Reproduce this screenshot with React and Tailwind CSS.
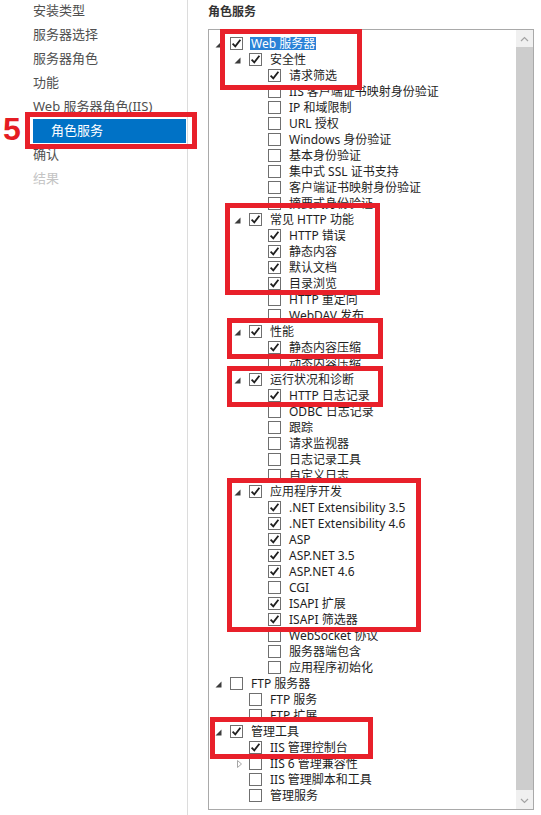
import React from 'react';

const navItems = [
  { label: '安装类型' },
  { label: '服务器选择' },
  { label: '服务器角色' },
  { label: '功能' },
  { label: 'Web 服务器角色(IIS)' },
  { label: '角色服务', active: true },
  { label: '确认' },
  { label: '结果', disabled: true },
];

// [label, level, checked, expander, highlighted]
const rows = [
  ['Web 服务器', 0, true, 'open', true],
  ['安全性', 1, true, 'open'],
  ['请求筛选', 2, true],
  ['IIS 客户端证书映射身份验证', 2, false],
  ['IP 和域限制', 2, false],
  ['URL 授权', 2, false],
  ['Windows 身份验证', 2, false],
  ['基本身份验证', 2, false],
  ['集中式 SSL 证书支持', 2, false],
  ['客户端证书映射身份验证', 2, false],
  ['摘要式身份验证', 2, false],
  ['常见 HTTP 功能', 1, true, 'open'],
  ['HTTP 错误', 2, true],
  ['静态内容', 2, true],
  ['默认文档', 2, true],
  ['目录浏览', 2, true],
  ['HTTP 重定向', 2, false],
  ['WebDAV 发布', 2, false],
  ['性能', 1, true, 'open'],
  ['静态内容压缩', 2, true],
  ['动态内容压缩', 2, false],
  ['运行状况和诊断', 1, true, 'open'],
  ['HTTP 日志记录', 2, true],
  ['ODBC 日志记录', 2, false],
  ['跟踪', 2, false],
  ['请求监视器', 2, false],
  ['日志记录工具', 2, false],
  ['自定义日志', 2, false],
  ['应用程序开发', 1, true, 'open'],
  ['.NET Extensibility 3.5', 2, true],
  ['.NET Extensibility 4.6', 2, true],
  ['ASP', 2, true],
  ['ASP.NET 3.5', 2, true],
  ['ASP.NET 4.6', 2, true],
  ['CGI', 2, false],
  ['ISAPI 扩展', 2, true],
  ['ISAPI 筛选器', 2, true],
  ['WebSocket 协议', 2, false],
  ['服务器端包含', 2, false],
  ['应用程序初始化', 2, false],
  ['FTP 服务器', 0, false, 'open'],
  ['FTP 服务', 1, false],
  ['FTP 扩展', 1, false],
  ['管理工具', 0, true, 'open'],
  ['IIS 管理控制台', 1, true],
  ['IIS 6 管理兼容性', 1, false, 'closed'],
  ['IIS 管理脚本和工具', 1, false],
  ['管理服务', 1, false],
];

const indents = ['w-0', 'w-[19px]', 'w-[38px]'];

const Expander = ({ type }) => {
  if (type === 'open') {
    return (
      <svg width="7" height="7" viewBox="0 0 7 7" className="ml-px mt-[3px]">
        <polygon points="6.5,0.5 6.5,6.5 0.5,6.5" fill="#3c3c3c" />
      </svg>
    );
  }
  if (type === 'closed') {
    return (
      <svg width="6" height="8" viewBox="0 0 6 8" className="ml-1 mt-px">
        <polygon points="0.5,0.5 4.5,4 0.5,7.5" fill="none" stroke="#a6a6a6" />
      </svg>
    );
  }
  return null;
};

const Checkbox = ({ checked }) => (
  <div className="w-[13px] h-[13px] border border-[#6f6f6f] bg-white flex items-center justify-center shrink-0">
    {checked && (
      <svg width="11" height="11" viewBox="0 0 11 11">
        <path d="M1.6 5.6 L4.3 8.4 L9.4 1.8" fill="none" stroke="#1f1f1f" strokeWidth="1.8" />
      </svg>
    )}
  </div>
);

// red annotation frames drawn over the screenshot
const marks = [
  'left-[220px] top-[29px] w-[142px] h-[61px]',
  'left-[25px] top-[112px] w-[172px] h-[37px]',
  'left-[225px] top-[203px] w-[155px] h-[92px]',
  'left-[227px] top-[318px] w-[156px] h-[41px]',
  'left-[227px] top-[366px] w-[156px] h-[41px]',
  'left-[227px] top-[478px] w-[194px] h-[154px]',
  'left-[210px] top-[717px] w-[163px] h-[42px]',
];

export default function App() {
  return (
    <div className="relative w-[541px] h-[815px] bg-white flex overflow-hidden font-['Noto_Sans','Noto_Sans_CJK_SC',sans-serif]">
      {/* Wizard steps */}
      <div className="w-[188px] shrink-0 border-r border-[#dcdcdc] -mt-px">
        {navItems.map((item) => (
          <div key={item.label} className="h-6 flex items-center pl-[33px] pr-px">
            {item.active ? (
              <div className="w-full h-6 bg-[#0072c6] text-white text-[13px] flex items-center pl-[18px]">
                {item.label}
              </div>
            ) : (
              <span className={`text-[13px] ${item.disabled ? 'text-[#c4c4c4]' : 'text-[#505050]'}`}>
                {item.label}
              </span>
            )}
          </div>
        ))}
      </div>

      {/* Role services */}
      <div className="flex-1 flex flex-col pl-5 pr-[7px]">
        <div className="h-[29px] flex items-start pt-[3px] text-[12px] font-bold text-[#333333]">角色服务</div>
        <div className="h-[781px] border border-[#a9a9a9] flex">
          <div className="flex-1 pt-[5px] pl-[5px]">
            {rows.map(([label, level, checked, expander, highlighted], i) => (
              <div key={i} className="h-4 flex items-center text-[12px] text-[#1e1e1e] whitespace-nowrap">
                <div className={`${indents[level]} shrink-0`} />
                <div className="w-4 h-4 shrink-0 flex items-center">
                  <Expander type={expander} />
                </div>
                <Checkbox checked={checked} />
                <span className={`ml-[7px] leading-[13px] px-px ${highlighted ? 'bg-[#2a82d7] text-white' : ''}`}>
                  {label}
                </span>
              </div>
            ))}
          </div>
          {/* Scrollbar */}
          <div className="w-[17px] shrink-0 bg-[#f0f0f0] flex flex-col">
            <div className="h-[17px] flex items-center justify-center">
              <svg width="9" height="6" viewBox="0 0 9 6">
                <path d="M1 5 L4.5 1.5 L8 5" fill="none" stroke="#a3a3a3" strokeWidth="1.2" />
              </svg>
            </div>
            <div className="flex-1 bg-[#cdcdcd] mb-[2px]" />
            <div className="h-[17px] flex items-center justify-center">
              <svg width="9" height="6" viewBox="0 0 9 6">
                <path d="M1 1 L4.5 4.5 L8 1" fill="none" stroke="#a3a3a3" strokeWidth="1.2" />
              </svg>
            </div>
          </div>
        </div>
      </div>

      {/* Annotations */}
      <div className="absolute left-[3px] top-[113px] text-[32px] leading-8 font-bold text-[#e51c23] font-['Liberation_Sans',sans-serif]">5</div>
      {marks.map((m) => (
        <div key={m} className={`absolute ${m} border-[5px] border-[#e8202a] pointer-events-none`} />
      ))}
    </div>
  );
}
